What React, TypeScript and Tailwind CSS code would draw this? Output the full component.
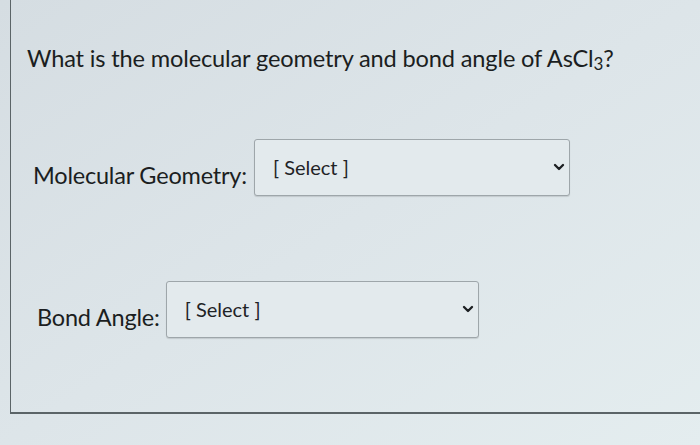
import React from 'react';
import { ChevronDown } from 'lucide-react';

const SelectBox: React.FC<{ width: string }> = ({ width }) => (
  <div
    className={`${width} h-[57px] flex items-center justify-between rounded-[3px] border border-[#9ea6aa] bg-[#e3eaed] pl-[18px] pr-[2px] pb-[2px] shadow-[0_1px_1px_rgba(0,0,0,0.12)]`}
  >
    <span className="text-[20px] text-[#1f2326]">[ Select ]</span>
    <ChevronDown size={16} strokeWidth={3.5} className="text-[#1c1f22]" />
  </div>
);

const App: React.FC = () => {
  return (
    <div className="w-[700px] h-[445px] overflow-hidden bg-gradient-to-br from-[#d5dde2] via-[#dde5e9] to-[#e4edef] font-['Lato','Open_Sans',sans-serif] text-[#1b1e21]">
      <div className="ml-[10px] h-[414px] border-l-[1.5px] border-b-2 border-[#5b6467] pt-[43px]">
        <h1 className="pl-[16px] text-[23.6px] leading-[30px] tracking-[-0.15px]">
          What is the molecular geometry and bond angle of AsCl
          <span className="relative top-[3px] text-[17px]">3</span>?
        </h1>

        <div className="mt-[63px] flex items-center pl-[22px]">
          <span className="text-[23.5px] pt-[17px] tracking-[-0.2px]">Molecular Geometry:</span>
          <div className="ml-[7px]">
            <SelectBox width="w-[316px]" />
          </div>
        </div>

        <div className="mt-[85px] flex items-center pl-[26px]">
          <span className="text-[23.5px] pt-[17px] tracking-[-0.2px]">Bond Angle:</span>
          <div className="ml-[6px]">
            <SelectBox width="w-[313px]" />
          </div>
        </div>
      </div>
    </div>
  );
};

export default App;
